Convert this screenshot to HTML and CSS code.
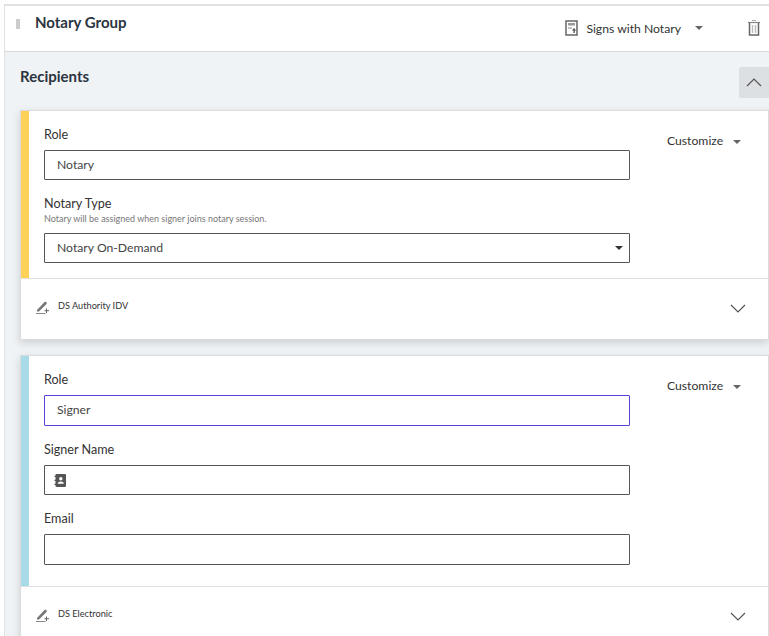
FILE: index.html
```html
<!DOCTYPE html>
<html lang="en">
<head>
    <meta charset="UTF-8">
    <title>Notary Group</title>
    <link rel="stylesheet" href="styles.css">
</head>
<body>
    <div class="group">
        <div class="group-header">
            <span class="drag-handle"></span>
            <h1>Notary Group</h1>
            <div class="signs-with">
                <svg class="doc-icon" width="13" height="16" viewBox="0 0 13 16">
                    <path d="M1 1h11v14H1z" fill="none" stroke="#666" stroke-width="1.5"/>
                    <path d="M3 3h7v2.500H3z" fill="#999"/>
                    <path d="M3 7.500h4v1H3z" fill="#888"/>
                    <path d="M9 8l2.200 2.400H9.800V13H8.400v-2.600H6.900z" fill="#555"/>
                </svg>
                <span>Signs with Notary</span>
                <span class="caret"></span>
            </div>
            <svg class="trash-icon" width="12" height="16" viewBox="0 0 12 16">
                <path d="M0 2.500h12" fill="none" stroke="#888" stroke-width="1.200"/>
                <path d="M4 .5h4" fill="none" stroke="#aaa" stroke-width="1"/>
                <path d="M1.500 3v12h9V3" fill="none" stroke="#666" stroke-width="1.500"/>
                <path d="M4.500 5v8M7.500 5v8" stroke="#bbb" stroke-width="1.400"/>
            </svg>
        </div>

        <div class="recipients">
            <div class="recipients-head">
                <h2>Recipients</h2>
                <button class="collapse-btn" type="button">
                    <svg width="16" height="9" viewBox="0 0 16 9"><path d="M1 8l7-7 7 7" fill="none" stroke="#555" stroke-width="1.200"/></svg>
                </button>
            </div>

            <div class="card card-notary">
                <div class="card-body">
                    <div class="fields">
                        <div class="field">
                            <label>Role</label>
                            <div class="input">Notary</div>
                        </div>
                        <div class="field field-type">
                            <label>Notary Type</label>
                            <div class="help">Notary will be assigned when signer joins notary session.</div>
                            <div class="input select">Notary On-Demand<span class="caret caret-dark"></span></div>
                        </div>
                    </div>
                    <div class="customize">Customize<span class="caret"></span></div>
                </div>
                <div class="card-footer">
                    <svg class="sign-icon" width="13" height="13" viewBox="0 0 13 13">
                        <path d="M1 9L8 1.500 9.500.5 11 2l-1 1.500L3 10.500H1z" fill="#777"/>
                        <path d="M0 12.500h9.500" stroke="#888" stroke-width="1"/>
                        <path d="M10.500 7.500v4.500M8.500 9.700h4.500" stroke="#666" stroke-width="1"/>
                    </svg>
                    <span>DS Authority IDV</span>
                    <svg class="expand-icon" width="16" height="9" viewBox="0 0 16 9"><path d="M1 1l7 7 7-7" fill="none" stroke="#555" stroke-width="1.200"/></svg>
                </div>
            </div>

            <div class="card card-signer">
                <div class="card-body">
                    <div class="fields">
                        <div class="field">
                            <label>Role</label>
                            <div class="input input-tall input-focus">Signer</div>
                        </div>
                        <div class="field field-gap">
                            <label>Signer Name</label>
                            <div class="input input-icon">
                                <svg width="12" height="13" viewBox="0 0 12 13">
                                    <path d="M2.500 0H11a1 1 0 0 1 1 1v11a1 1 0 0 1-1 1H2.500a1 1 0 0 1-1-1v-1H.5V9.800h1V7H.5V5.800h1V3H.5V1.800h1V1a1 1 0 0 1 1-1z" fill="#555"/>
                                    <circle cx="6.800" cy="4.800" r="1.700" fill="#fff"/>
                                    <path d="M3.800 9.800c0-1.700 1.400-2.400 3-2.400s3 .7 3 2.400z" fill="#fff"/>
                                </svg>
                            </div>
                        </div>
                        <div class="field field-gap">
                            <label>Email</label>
                            <div class="input input-tall"></div>
                        </div>
                    </div>
                    <div class="customize">Customize<span class="caret"></span></div>
                </div>
                <div class="card-footer">
                    <svg class="sign-icon" width="13" height="13" viewBox="0 0 13 13">
                        <path d="M1 9L8 1.500 9.500.5 11 2l-1 1.500L3 10.500H1z" fill="#777"/>
                        <path d="M0 12.500h9.500" stroke="#888" stroke-width="1"/>
                        <path d="M10.500 7.500v4.500M8.500 9.700h4.500" stroke="#666" stroke-width="1"/>
                    </svg>
                    <span>DS Electronic</span>
                    <svg class="expand-icon" width="16" height="9" viewBox="0 0 16 9"><path d="M1 1l7 7 7-7" fill="none" stroke="#555" stroke-width="1.200"/></svg>
                </div>
            </div>
        </div>
    </div>
</body>
</html>
```

FILE: styles.css
```css
html, body {
    height: 636px;
    overflow: hidden;
}
body {
    margin: 0;
    padding: 4px 0 0 4px;
    box-sizing: border-box;
    font-family: Lato, "Open Sans", sans-serif;
    font-size: 12.2px;
    color: #333;
    background: #fff;
}
.group {
    border-top: 2px solid #e2e2e2;
    border-left: 1px solid #e2e2e2;
    height: 630px;
    overflow: hidden;
}
.group-header {
    display: flex;
    align-items: flex-start;
    height: 45px;
    border-bottom: 1px solid #d9d9d9;
    background: #fff;
}
.drag-handle {
    width: 4px;
    height: 10px;
    margin: 13px 15px 0 11px;
    background: #ccc;
}
h1 {
    margin: 7px 0 0;
    font-size: 15px;
    font-weight: 700;
    color: #2b3440;
}
.signs-with {
    display: flex;
    align-items: center;
    margin: 14px 0 0 auto;
    color: #333;
}
.doc-icon {
    margin-right: 8px;
}
.caret {
    display: inline-block;
    margin-left: 14px;
    border-left: 4px solid transparent;
    border-right: 4px solid transparent;
    border-top: 4px solid #666;
}
.caret-dark {
    border-top-color: #333;
}
.trash-icon {
    margin: 14px 9px 0 45px;
}
.recipients {
    background: #f0f3f6;
    padding: 0 0 0 15px;
    height: 100%;
}
.recipients-head {
    display: flex;
    justify-content: space-between;
    height: 58px;
}
h2 {
    margin: 15px 0 0;
    font-size: 15px;
    font-weight: 700;
    color: #2b3440;
}
.collapse-btn {
    width: 30px;
    height: 31px;
    margin-top: 15px;
    padding: 0;
    border: none;
    border-radius: 2px 0 0 2px;
    background: #dde0e3;
}
.card {
    background: #fff;
    border: 1px solid #dcdcdc;
    margin-bottom: 15px;
    box-shadow: 0 3px 8px rgba(0, 0, 0, 0.15);
}
.card-body {
    display: flex;
    border-left: 8px solid;
    padding: 16px 0 15px 15px;
}
.card-notary .card-body {
    border-left-color: #ffd156;
}
.card-signer .card-body {
    border-left-color: #a8dbe7;
    padding-bottom: 21px;
}
.fields {
    width: 586px;
}
.field label {
    display: block;
    font-size: 12.6px;
    line-height: 16px;
    margin-bottom: 7px;
}
.field-type {
    margin-top: 16px;
}
.field-type label {
    margin-bottom: 0;
}
.field-gap {
    margin-top: 16px;
}
.help {
    font-size: 9px;
    line-height: 13px;
    margin-bottom: 8px;
    color: #777;
}
.input {
    display: flex;
    align-items: center;
    height: 28px;
    padding: 0 12px;
    border: 1px solid #555;
    border-radius: 1px;
    line-height: 28px;
    color: #444;
}
.input-tall {
    padding-bottom: 1px;
}
.input-focus {
    border-color: #5b3fd6;
}
.input-icon {
    padding-left: 9px;
}
.select {
    justify-content: space-between;
    padding-right: 6px;
}
.customize {
    margin: 6px 0 0 37px;
    color: #333;
}
.customize .caret {
    margin-left: 10px;
    vertical-align: 1px;
}
.card-footer {
    display: flex;
    align-items: flex-start;
    height: 60px;
    border-top: 1px solid #e0e0e0;
    font-size: 9.2px;
    color: #333;
}
.sign-icon {
    margin: 22px 9px 0 15px;
}
.card-footer span {
    margin-top: 21px;
}
.expand-icon {
    margin: 25px 22px 0 auto;
}
```
